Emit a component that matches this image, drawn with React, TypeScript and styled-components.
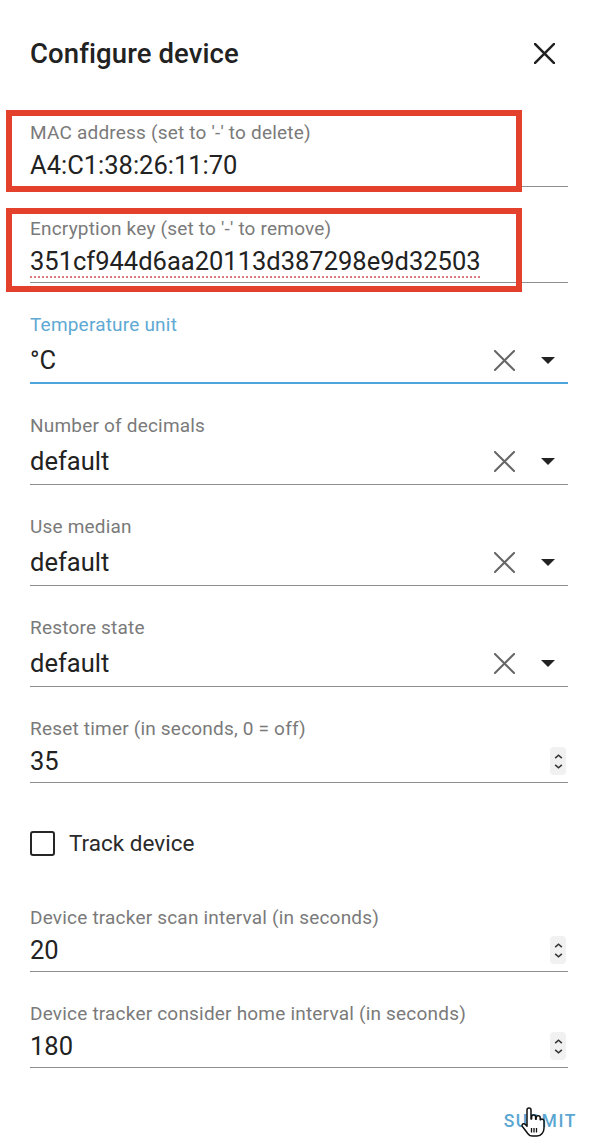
import styled, { createGlobalStyle } from "styled-components";

const GlobalStyle = createGlobalStyle`
  html, body {
    margin: 0;
    padding: 0;
    background: #fff;
  }
  body {
    font-family: Roboto, "Noto Sans", Arial, sans-serif;
    color: #212121;
  }
`;

const Dialog = styled.div`
  position: relative;
  width: 600px;
  height: 1148px;
  box-sizing: border-box;
  padding: 0 32px 0 30px;
  display: flex;
  flex-direction: column;
  overflow: hidden;
  background: #fff;
`;

const Header = styled.div`
  height: 106px;
  display: flex;
  align-items: center;
  justify-content: space-between;
`;

const Title = styled.h2`
  margin: 0;
  font-size: 27.5px;
  font-weight: 500;
  letter-spacing: 0.1px;
  color: #222;
`;

const CloseButton = styled.button`
  width: 36px;
  height: 36px;
  margin-right: 6px;
  padding: 0;
  border: none;
  background: none;
  display: flex;
  align-items: center;
  justify-content: center;
  color: #212121;
`;

const Form = styled.div`
  display: flex;
  flex-direction: column;
  gap: 32px;
  margin-top: 17px;
`;

const Field = styled.div`
  position: relative;
  display: flex;
  flex-direction: column;
`;

const Label = styled.div<{ $focused?: boolean }>`
  height: 20px;
  line-height: 20px;
  font-size: 19px;
  letter-spacing: 0.2px;
  white-space: nowrap;
  color: ${(p) => (p.$focused ? "#5ea9d3" : "#7a7a7a")};
`;

const ValueRow = styled.div<{ $select?: boolean }>`
  height: ${(p) => (p.$select ? "36px" : "30px")};
  margin-top: 7px;
  display: flex;
  align-items: center;
`;

const Value = styled.span<{ $spell?: boolean }>`
  flex: 1;
  font-size: 25.5px;
  color: #222;
  white-space: nowrap;
  ${(p) =>
    p.$spell
      ? `
    text-decoration-line: underline;
    text-decoration-style: dotted;
    text-decoration-color: #dd7a7a;
    text-decoration-thickness: 2px;
    text-underline-offset: 6px;
  `
      : ""}
`;

const Underline = styled.div<{ $focused?: boolean; $select?: boolean }>`
  height: ${(p) => (p.$focused ? "2px" : "1px")};
  margin-top: ${(p) => (p.$select ? (p.$focused ? "4px" : "5px") : "6px")};
  background: ${(p) => (p.$focused ? "#4ea4dc" : "#8e8e8e")};
`;

const Highlight = styled.div<{ $top: number; $height: number }>`
  position: absolute;
  left: -24px;
  top: ${(p) => p.$top}px;
  width: 516px;
  height: ${(p) => p.$height}px;
  box-sizing: border-box;
  border: 6px solid #e3412c;
  pointer-events: none;
`;

const SelectIcons = styled.div`
  display: flex;
  align-items: center;
  gap: 26px;
  margin-right: 13px;
`;

const Spinner = styled.div`
  width: 16px;
  height: 28px;
  margin-right: 2px;
  border-radius: 4px;
  background: #f1f1f1;
  display: flex;
  flex-direction: column;
  align-items: center;
  justify-content: center;
  gap: 5px;
`;

const CheckRow = styled.label`
  display: flex;
  align-items: center;
  gap: 14px;
  margin: 15px 0 20px;
  height: 26px;
`;

const Box = styled.span`
  width: 25px;
  height: 25px;
  box-sizing: border-box;
  border: 2.5px solid #262626;
  border-radius: 3px;
`;

const CheckText = styled.span`
  font-size: 22.5px;
  color: #2a2a2a;
`;

const Footer = styled.div`
  display: flex;
  justify-content: flex-end;
  margin-top: 35px;
  margin-right: -12px;
`;

const SubmitButton = styled.button`
  position: relative;
  height: 36px;
  padding: 0 3px;
  border: none;
  background: none;
  font-family: Roboto, "Noto Sans", Arial, sans-serif;
  font-size: 17.5px;
  font-weight: 500;
  letter-spacing: 1.6px;
  color: #5aa6d2;
`;

const Cursor = styled.svg`
  position: absolute;
  left: 18px;
  top: 4px;
`;

function CloseIcon({ size, color, width }: { size: number; color: string; width: number }) {
  return (
    <svg width={size} height={size} viewBox="0 0 22 22">
      <path d="M1 1L21 21M21 1L1 21" stroke={color} strokeWidth={width} strokeLinecap="square" />
    </svg>
  );
}

function Caret() {
  return (
    <svg width="14" height="7" viewBox="0 0 14 7">
      <path d="M0 0H14L7 7Z" fill="#222" />
    </svg>
  );
}

function NumberSpinner() {
  return (
    <Spinner>
      <svg width="9" height="5" viewBox="0 0 10 6">
        <path d="M1 5L5 1.5L9 5" stroke="#333" strokeWidth="1.8" fill="none" />
      </svg>
      <svg width="9" height="5" viewBox="0 0 10 6">
        <path d="M1 1L5 4.5L9 1" stroke="#333" strokeWidth="1.8" fill="none" />
      </svg>
    </Spinner>
  );
}

type TextProps = {
  label: string;
  value: string;
  spell?: boolean;
  number?: boolean;
  children?: React.ReactNode;
};

function TextField({ label, value, spell, number, children }: TextProps) {
  return (
    <Field>
      <Label>{label}</Label>
      <ValueRow>
        <Value $spell={spell}>{value}</Value>
        {number && <NumberSpinner />}
      </ValueRow>
      <Underline />
      {children}
    </Field>
  );
}

type SelectProps = {
  label: string;
  value: string;
  focused?: boolean;
};

function SelectField({ label, value, focused }: SelectProps) {
  return (
    <Field>
      <Label $focused={focused}>{label}</Label>
      <ValueRow $select>
        <Value>{value}</Value>
        <SelectIcons>
          <CloseIcon size={21} color="#666" width={2.1} />
          <Caret />
        </SelectIcons>
      </ValueRow>
      <Underline $select $focused={focused} />
    </Field>
  );
}

export default function App() {
  return (
    <>
      <GlobalStyle />
      <Dialog>
        <Header>
          <Title>Configure device</Title>
          <CloseButton>
            <CloseIcon size={21} color="#212121" width={2.6} />
          </CloseButton>
        </Header>

        <Form>
          <TextField label="MAC address (set to '-' to delete)" value="A4:C1:38:26:11:70">
            <Highlight $top={-13} $height={82} />
          </TextField>
          <TextField
            label="Encryption key (set to '-' to remove)"
            value="351cf944d6aa20113d387298e9d32503"
            spell
          >
            <Highlight $top={-11} $height={84} />
          </TextField>
          <SelectField label="Temperature unit" value="°C" focused />
          <SelectField label="Number of decimals" value="default" />
          <SelectField label="Use median" value="default" />
          <SelectField label="Restore state" value="default" />
          <TextField label="Reset timer (in seconds, 0 = off)" value="35" number />

          <CheckRow>
            <Box />
            <CheckText>Track device</CheckText>
          </CheckRow>

          <TextField label="Device tracker scan interval (in seconds)" value="20" number />
          <TextField
            label="Device tracker consider home interval (in seconds)"
            value="180"
            number
          />
        </Form>

        <Footer>
          <SubmitButton>
            SUBMIT
            <Cursor width="26" height="32" viewBox="0 0 26 32">
              <path
                d="M8 3a2 2 0 0 1 4 0v9h.6v-2a2 2 0 0 1 4 0v2.2h.6v-1.4a2 2 0 0 1 4 0v2h.4a1.9 1.9 0 0 1 3.4 1.2V21c0 4-2.6 8-7 8h-4.5c-2.6 0-4-1.2-5.3-3.2L3.4 19.5c-1-1.4.2-3.2 1.8-2.7.9.3 1.7 1 2.8 2.4V3z"
                fill="#fff"
                stroke="#111"
                strokeWidth="1.5"
                strokeLinejoin="round"
              />
              <path d="M12.5 21v4.5M15 21v4.5M17.5 21v4.5" stroke="#111" strokeWidth="1.3" />
            </Cursor>
          </SubmitButton>
        </Footer>
      </Dialog>
    </>
  );
}
